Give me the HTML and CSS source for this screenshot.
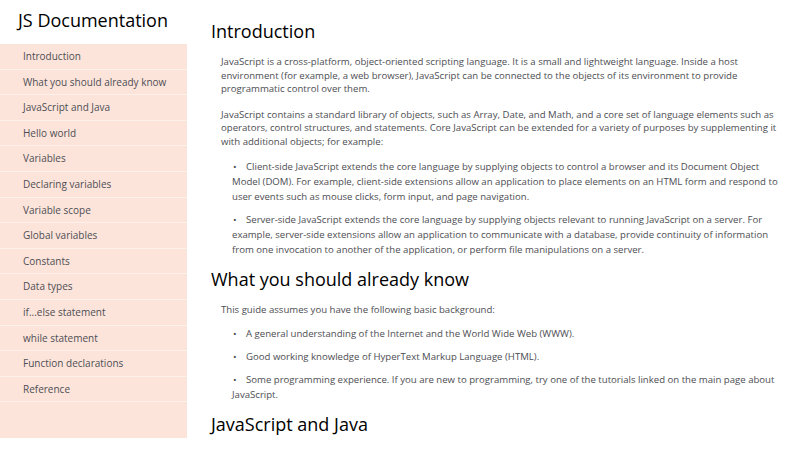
FILE: index.html
```html
<!DOCTYPE html>
<html lang="en">
<head>
<meta charset="utf-8">
<title>JS Documentation</title>
<link rel="stylesheet" href="styles.css">
</head>
<body>
<div class="page">
  <nav class="navbar" id="navbar">
    <header class="nav-title">JS Documentation</header>
    <ul class="nav-list">
      <li><a class="nav-link" href="#Introduction">Introduction</a></li>
      <li><a class="nav-link" href="#What">What you should already know</a></li>
      <li><a class="nav-link" href="#JavaScript_and_Java">JavaScript and Java</a></li>
      <li><a class="nav-link" href="#Hello">Hello world</a></li>
      <li><a class="nav-link" href="#Variables">Variables</a></li>
      <li><a class="nav-link" href="#Declaring">Declaring variables</a></li>
      <li><a class="nav-link" href="#Scope">Variable scope</a></li>
      <li><a class="nav-link" href="#Global">Global variables</a></li>
      <li><a class="nav-link" href="#Constants">Constants</a></li>
      <li><a class="nav-link" href="#Data">Data types</a></li>
      <li><a class="nav-link" href="#If">if...else statement</a></li>
      <li><a class="nav-link" href="#While">while statement</a></li>
      <li><a class="nav-link" href="#Function">Function declarations</a></li>
      <li><a class="nav-link" href="#Reference">Reference</a></li>
    </ul>
  </nav>
  <main class="main-doc" id="main-doc">
    <section class="main-section" id="Introduction">
      <header class="section-title">Introduction</header>
      <article class="section-body">
        <p>JavaScript is a cross-platform, object-oriented scripting language. It is a small and lightweight language. Inside a host environment (for example, a web browser), JavaScript can be connected to the objects of its environment to provide programmatic control over them.</p>
        <p>JavaScript contains a standard library of objects, such as Array, Date, and Math, and a core set of language elements such as operators, control structures, and statements. Core JavaScript can be extended for a variety of purposes by supplementing it with additional objects; for example:</p>
        <ul>
          <li>Client-side JavaScript extends the core language by supplying objects to control a browser and its Document Object Model (DOM). For example, client-side extensions allow an application to place elements on an HTML form and respond to user events such as mouse clicks, form input, and page navigation.</li>
          <li>Server-side JavaScript extends the core language by supplying objects relevant to running JavaScript on a server. For example, server-side extensions allow an application to communicate with a database, provide continuity of information from one invocation to another of the application, or perform file manipulations on a server.</li>
        </ul>
      </article>
    </section>
    <section class="main-section" id="What">
      <header class="section-title">What you should already know</header>
      <article class="section-body">
        <p>This guide assumes you have the following basic background:</p>
        <ul>
          <li>A general understanding of the Internet and the World Wide Web (WWW).</li>
          <li>Good working knowledge of HyperText Markup Language (HTML).</li>
          <li>Some programming experience. If you are new to programming, try one of the tutorials linked on the main page about JavaScript.</li>
        </ul>
      </article>
    </section>
    <section class="main-section" id="JavaScript_and_Java">
      <header class="section-title">JavaScript and Java</header>
      <article class="section-body">
        <p>JavaScript and Java are similar in some ways but fundamentally different in some others.</p>
      </article>
    </section>
  </main>
</div>
</body>
</html>
```
FILE: styles.css
```css
html, body {
  margin: 0;
  padding: 0;
}
body {
  font-family: "Open Sans", "Noto Sans", sans-serif;
  color: #4d4e53;
  background: #fff;
}
.page {
  display: flex;
  align-items: flex-start;
  height: 450px;
  overflow: hidden;
}
.navbar {
  width: 187px;
  flex: none;
}
.nav-title {
  height: 44px;
  box-sizing: border-box;
  padding: 8px 0 0 18px;
  font-size: 18px;
  line-height: 24px;
  color: #000;
}
.nav-list {
  list-style: none;
  margin: 0;
  padding: 0;
  height: 394px;
  background: #fde4db;
}
.nav-list li {
  border-bottom: 1px solid #fef0eb;
}
.nav-link {
  display: block;
  height: 24.6px;
  line-height: 24.6px;
  padding-left: 23px;
  font-size: 10px;
  color: #4d4e53;
  text-decoration: none;
}
.main-doc {
  flex: 1;
  margin-left: 24px;
  padding: 19px 20px 0 0;
}
.section-title {
  font-size: 18px;
  line-height: 24.5px;
  color: #000;
  margin: 0 0 11.5px;
}
.section-body {
  font-size: 9.6px;
}
.section-body p {
  margin: 0 0 12px 10px;
  line-height: 13.6px;
}
.section-body p + ul {
  margin-top: -2px;
}
.section-body ul {
  margin-bottom: 10px;
  margin-left: 21px;
  padding: 0;
  list-style: none;
}
.section-body li {
  line-height: 15px;
  margin-bottom: 8px;
}
.section-body li:last-child {
  margin-bottom: 0;
}
.section-body li::before {
  content: "•";
  display: inline-block;
  width: 13px;
  padding-left: 1px;
}
```
